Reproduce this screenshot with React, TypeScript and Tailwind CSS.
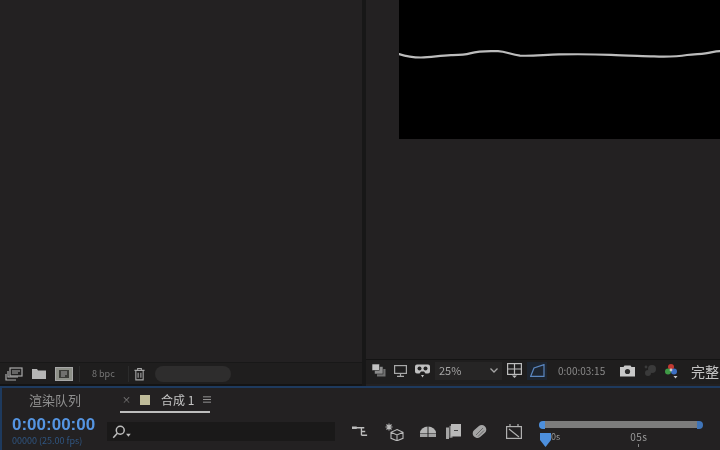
const cjk = 'font-["Noto_Sans_CJK_SC","Noto_Sans",sans-serif]';

function Wave() {
  return (
    <svg viewBox="0 0 321 139" className="block w-[321px] h-[139px]" fill="none">
      <path
        d="M0 54 C6 56 12 57.5 22 57.5 C32 57.5 40 55.6 52 55.2 C60 55 65 55 71 53.4 C79 51.2 90 50.8 99 51.2 C107 51.6 112 54.6 121 55.6 C131 56.4 145 54.8 160 54.4 C175 54.2 195 54.2 212 54.8 C225 55.6 240 55.8 255 56.4 C268 56.9 277 56.8 288 55 C298 53.8 305 54.4 312 52.4 C316 51.6 318 51.2 321 51.2"
        stroke="#bcbcbc"
        strokeWidth="2.2"
        strokeLinecap="round"
      />
    </svg>
  );
}

function ProjectIcons() {
  return (
    <>
      <svg viewBox="0 0 18 14" className="w-[18px] h-[14px]" fill="none" stroke="#aaa" strokeWidth="1.2">
        <rect x="5" y="1" width="12" height="8" fill="#222" />
        <path d="M7 4h8M7 6h6" />
        <path d="M3 4v6h10M1 7v6h10" />
      </svg>
      <svg viewBox="0 0 14 11" className="w-[14px] h-[11px] ml-[9px]">
        <path d="M0 1h5l1 1.5h8V11H0z" fill="#b5b5b5" />
      </svg>
      <svg viewBox="0 0 18 14" className="w-[18px] h-[14px] ml-[9px]">
        <rect x="0.5" y="0.5" width="17" height="13" fill="#8d9088" stroke="#a8a8a8" />
        <rect x="4" y="3" width="10" height="8" fill="#3a3c37" />
        <path d="M6 5h6M6 7h6M6 9h4" stroke="#a5a5a5" strokeWidth="1" />
      </svg>
    </>
  );
}

function Trash() {
  return (
    <svg viewBox="0 0 12 14" className="w-[11px] h-[14px]" fill="none" stroke="#a5a5a5" strokeWidth="1.2">
      <path d="M0.5 3h11M4 3V1h4v2M2 3v10.4h8V3M4.5 5.5v5.5M7.5 5.5v5.5" />
    </svg>
  );
}

function ViewerLeftIcons() {
  return (
    <>
      <svg viewBox="0 0 14 13" className="w-[14px] h-[13px]">
        <rect x="5" y="5" width="8.5" height="7.5" fill="#6f6f6f" />
        <rect x="2.5" y="2.5" width="8.5" height="7.5" fill="#8c8c8c" stroke="#222" strokeWidth="0.6" />
        <rect x="0" y="0" width="7.5" height="6.5" fill="#c2c2c2" stroke="#222" strokeWidth="0.6" />
      </svg>
      <svg viewBox="0 0 13 12" className="w-[13px] h-[12px] ml-[8px]" fill="none" stroke="#a8a8a8" strokeWidth="1.2">
        <rect x="0.6" y="0.6" width="11.8" height="7.8" />
        <path d="M6.5 9v2M3 11.4h7" />
      </svg>
      <svg viewBox="0 0 15 14" className="w-[15px] h-[14px] ml-[8px]">
        <path d="M2 0.5h11a2 2 0 0 1 2 2v5a2 2 0 0 1-2 2h-2.5l-1.5-2h-3l-1.5 2H2a2 2 0 0 1-2-2v-5a2 2 0 0 1 2-2z" fill="#c0c0c0" />
        <circle cx="4.5" cy="4.5" r="2" fill="#222" />
        <circle cx="10.5" cy="4.5" r="2" fill="#222" />
        <path d="M6 11h3l-1.5 2.5z" fill="#c0c0c0" />
      </svg>
    </>
  );
}

function ViewerRightIcons() {
  return (
    <>
      <svg viewBox="0 0 15 11" className="w-[15px] h-[12px]">
        <path d="M0 1.5h3.5l1-1.5h6l1 1.5H15V11H0z" fill="#c8c8c8" />
        <circle cx="7.5" cy="6" r="2.6" fill="#2a2a2a" />
      </svg>
      <svg viewBox="0 0 14 14" className="w-[14px] h-[14px] ml-[8px]" fill="#3a3a3a">
        <circle cx="9" cy="5" r="4" />
        <circle cx="5" cy="9" r="3" />
        <circle cx="3" cy="3" r="1.4" />
      </svg>
      <svg viewBox="0 0 14 16" className="w-[14px] h-[16px] ml-[7px]">
        <circle cx="7" cy="4" r="3" fill="#c23a33" />
        <circle cx="4" cy="8.5" r="3" fill="#3f9a46" />
        <circle cx="10" cy="8.5" r="3" fill="#3c6fc4" />
        <circle cx="7" cy="7" r="1.4" fill="#cfcfcf" />
        <path d="M9.5 13h4l-2 2.5z" fill="#c8c8c8" />
      </svg>
    </>
  );
}

function TimelineIcons() {
  return (
    <div className="flex items-center h-[19px] ml-[17px] shrink-0">
      <svg viewBox="0 0 18 13" className="w-[17px] h-[13px]" fill="none" stroke="#bdbdbd" strokeWidth="1.4">
        <path d="M0 2.5h5M5 2.5h8M10 2.5v8M10 6.5h4M10 10.5h6" />
        <path d="M0 2.5h5" strokeWidth="2.6" />
      </svg>
      <svg viewBox="0 0 20 18" className="w-[20px] h-[18px] ml-[15px]" fill="none" stroke="#b9b9b9" strokeWidth="1.1">
        <path d="M5 0.5v7M1.5 4h7M2.5 1.5l5 5M7.5 1.5l-5 5" />
        <path d="M13 6.5l6 2.8v6l-6 2.5-6-2.5v-6zM7 9.3l6 2.7 6-2.7M13 12v5.8" />
      </svg>
      <svg viewBox="0 0 16 11" className="w-[16px] h-[11px] ml-[16px]">
        <path d="M0 7a8 6.5 0 0 1 16 0z" fill="#b5b5b5" />
        <rect x="0" y="7.5" width="16" height="3.5" fill="#a3a3a3" />
        <path d="M8 0v11" stroke="#222" strokeWidth="1" />
      </svg>
      <svg viewBox="0 0 15 15" className="w-[15px] h-[15px] ml-[10px]">
        <rect x="0" y="3.5" width="3" height="11.5" fill="#a5a5a5" />
        <rect x="3.5" y="1.8" width="3" height="12" fill="#8c8c8c" />
        <rect x="5" y="0" width="10" height="12.5" fill="#b9b9b9" />
        <path d="M8 6.5h4" stroke="#444" strokeWidth="1" />
      </svg>
      <svg viewBox="0 0 15 15" className="w-[15px] h-[15px] ml-[11px]">
        <rect x="0" y="3" width="15" height="9" rx="4.5" transform="rotate(-40 7.5 7.5)" fill="#a5a5a5" />
        <path d="M4 11l7-7M6 12.5l6-6" stroke="#555" strokeWidth="0.8" />
      </svg>
      <svg viewBox="0 0 16 15" className="w-[16px] h-[15px] ml-[19px]" fill="none" stroke="#b0b0b0" strokeWidth="1.2">
        <rect x="0.6" y="2.6" width="14.8" height="11.8" />
        <path d="M4 0v3M12 0v3M3 5l10 8" />
      </svg>
    </div>
  );
}

export default function App() {
  return (
    <div className={`w-[720px] h-[450px] overflow-hidden flex flex-col bg-[#141414] blur-[0.4px] ${cjk}`}>
      <div className="flex h-[386px]">
        <div className="w-[362px] flex flex-col">
          <div className="flex-1 bg-[#232122]" />
          <div className="h-[22px] mb-[2px] flex items-center pl-[5px] bg-[#1f1e1e] border-t border-[#181818]">
            <ProjectIcons />
            <div className="w-px h-[16px] bg-[#2b2b2b] ml-[6px]" />
            <span className="ml-[12px] w-[34px] text-[9px] leading-none text-[#777]">8 bpc</span>
            <div className="w-px h-[16px] bg-[#2b2b2b] ml-[2px]" />
            <div className="ml-[5px]">
              <Trash />
            </div>
            <div className="ml-[10px] w-[76px] h-[16px] rounded-full bg-[#2e2d2d]" />
          </div>
        </div>
        <div className="w-[4px] bg-[#171717]" />
        <div className="flex-1 min-w-0 flex flex-col bg-[#232122]">
          <div className="flex-1">
            <div className="ml-[33px] h-[139px] bg-black">
              <Wave />
            </div>
          </div>
          <div className="h-[25px] mb-[2px] pb-[3px] flex items-center pl-[6px] bg-[#1f1e1e] border-t border-[#141414] whitespace-nowrap">
            <ViewerLeftIcons />
            <div className="ml-[5px] w-[67px] h-[18px] bg-[#262525] flex items-center justify-between px-[4px] text-[11px] text-[#a5a5a5]">
              <span>25%</span>
              <svg viewBox="0 0 8 5" className="w-[8px] h-[5px]" fill="none" stroke="#a5a5a5" strokeWidth="1.3">
                <path d="M0.5 0.5L4 4l3.5-3.5" />
              </svg>
            </div>
            <svg viewBox="0 0 15 15" className="w-[15px] h-[15px] ml-[5px]" fill="none" stroke="#bcbcbc" strokeWidth="1.2">
              <rect x="0.6" y="0.6" width="13.8" height="10.8" />
              <path d="M7.5 1v10M1 6h13" />
              <path d="M5 12.5h5l-2.5 2.5z" fill="#bcbcbc" stroke="none" />
            </svg>
            <div className="ml-[5px] w-[20px] h-[18px] bg-[#1d2530] flex items-center justify-center">
              <svg viewBox="0 0 15 13" className="w-[15px] h-[13px]" fill="none" stroke="#5b87c0" strokeWidth="1.2">
                <path d="M0.6 12.4L4 4l10-3.4v11.8z" />
              </svg>
            </div>
            <span className="ml-[11px] text-[10px] leading-none text-[#8a8a8a] w-[60px]">0:00:03:15</span>
            <div className="ml-[2px] flex items-center">
              <ViewerRightIcons />
            </div>
            <span className="ml-[13px] text-[14px] leading-none text-[#c4c4c4]">完整</span>
          </div>
        </div>
      </div>
      <div className="flex-1 min-h-0 border-t-[2px] border-l-[2px] border-[#1e3a5e] bg-[#232122] pl-[10px]">
        <div className="flex h-[27px] items-start">
          <span className="ml-[17px] text-[13px] leading-[23px] text-[#8f8f8f] whitespace-nowrap">渲染队列</span>
          <div className="ml-[39px] h-[25px] w-[90px] shrink-0 flex items-center border-b-[2px] border-[#bdbdbd] whitespace-nowrap">
            <span className="text-[9px] leading-none text-[#8a8a8a] ml-[2px]">×</span>
            <div className="ml-[9px] w-[10px] h-[10px] shrink-0 bg-[#bfbc9a]" />
            <span className="ml-[11px] text-[12px] leading-none text-[#c4c4c4]">合成 1</span>
            <svg viewBox="0 0 9 7" className="w-[8px] h-[7px] ml-[9px] shrink-0" stroke="#a0a0a0" strokeWidth="1">
              <path d="M0 0.5h9M0 3.5h9M0 6.5h9" />
            </svg>
          </div>
        </div>
        <div className="flex items-start">
          <div className="w-[85px] mt-[1px] shrink-0">
            <div className="text-[17px] leading-[18px] font-bold text-[#5595e2] font-['Liberation_Sans',sans-serif] whitespace-nowrap">0:00:00:00</div>
            <div className="text-[9px] leading-[13px] text-[#2f5580] whitespace-nowrap">00000 (25.00 fps)</div>
          </div>
          <div className="w-[228px] h-[19px] ml-[10px] mt-[7px] shrink-0 bg-[#1a1919] flex items-center pl-[5px]">
            <svg viewBox="0 0 17 12" className="w-[20px] h-[14px]" fill="none" stroke="#bdbdbd" strokeWidth="1.3">
              <circle cx="7" cy="4.5" r="3.4" />
              <path d="M4.5 7L1 11" />
              <path d="M12 7.5h4l-2 2.5z" fill="#bdbdbd" stroke="none" />
            </svg>
          </div>
          <div className="mt-[7px]">
            <TimelineIcons />
          </div>
          <div className="ml-[17px] w-[164px] mt-[5px] shrink-0">
            <div className="flex items-center h-[9px]">
              <div className="w-[6px] h-[8px] rounded-l-full bg-[#4d8fdc]" />
              <div className="flex-1 h-[7px] bg-[#7c7c7c]" />
              <div className="w-[6px] h-[8px] rounded-r-full bg-[#3f74b8]" />
            </div>
            <div className="flex items-start">
              <svg viewBox="0 0 11 14" className="w-[11px] h-[14px] mt-[4px] ml-[1px] shrink-0">
                <path d="M0 0h11v7l-5.5 7-5.5-7z" fill="#4d8fdc" />
              </svg>
              <span className="mt-[1px] text-[9px] leading-[14px] text-[#9a9a9a]">0s</span>
              <div className="ml-[70px] mt-[1px] flex flex-col items-center">
                <span className="text-[10px] leading-[14px] text-[#9a9a9a] tracking-[0.5px]">05s</span>
                <div className="w-px h-[3px] bg-[#888]" />
              </div>
            </div>
          </div>
        </div>
      </div>
    </div>
  );
}
